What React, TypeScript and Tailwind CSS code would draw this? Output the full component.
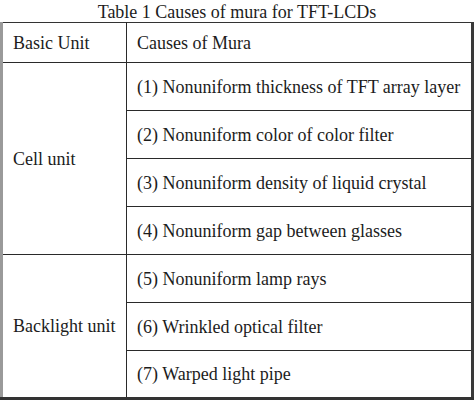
export default function App() {
  const cell = ["(1) Nonuniform thickness of TFT array layer", "(2) Nonuniform color of color filter", "(3) Nonuniform density of liquid crystal", "(4) Nonuniform gap between glasses"];
  const backlight = ["(5) Nonuniform lamp rays", "(6) Wrinkled optical filter", "(7) Warped light pipe"];

  return (
    <div className="w-[474px] h-[401px] bg-white text-[#1c1c1c] text-[18px] leading-none font-['Liberation_Serif','Times_New_Roman',serif]">
      <div className="h-[22px] flex items-center justify-center text-[18px] pt-[1px]">Table 1 Causes of mura for TFT-LCDs</div>
      <table className="w-full border-collapse table-fixed border-t-[1.5px] border-b-[3px] border-l-[3px] border-r-[3px] border-t-[#333] border-b-[#333] border-l-[#9a9a9a] border-r-[#3a3a3a]">
        <colgroup>
          <col className="w-[125px]" />
          <col />
        </colgroup>
        <tbody>
          <tr className="h-[40px]">
            <td className="border-b-[1.5px] border-r-[1.5px] border-[#2a2a2a] pl-[10px]">Basic Unit</td>
            <td className="border-b-[1.5px] border-[#2a2a2a] pl-[10px]">Causes of Mura</td>
          </tr>
          {cell.map((t, i) => (
            <tr key={t} className="h-[48px]">
              {i === 0 ? (
                <td rowSpan={4} className="border-b-[1.5px] border-r-[1.5px] border-[#2a2a2a] pl-[10px]">Cell unit</td>
              ) : null}
              <td className="border-b-[1.5px] border-[#2a2a2a] pl-[10px]">{t}</td>
            </tr>
          ))}
          {backlight.map((t, i) => (
            <tr key={t} className="h-[48px]">
              {i === 0 ? (
                <td rowSpan={3} className="border-r-[1.5px] border-[#2a2a2a] pl-[10px]">Backlight unit</td>
              ) : null}
              <td className={i < 2 ? "border-b-[1.5px] border-[#2a2a2a] pl-[10px]" : "pl-[10px]"}>{t}</td>
            </tr>
          ))}
        </tbody>
      </table>
    </div>
  );
}
